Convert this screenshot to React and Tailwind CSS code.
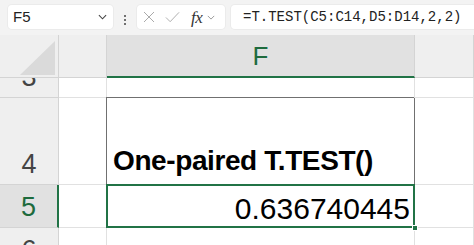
import React from "react";

const gl = "border-r border-b border-[#e1e1e1]";
const hd = "border-r border-b border-[#d4d4d4] bg-[#efefef]";

const Chevron = ({ className }) => (
  <svg viewBox="0 0 10 6" className={className} fill="none" stroke="currentColor" strokeWidth="1.2">
    <path d="M1 1l4 4 4-4" />
  </svg>
);

const RowNum = ({ n, active }) => (
  <div
    className={`flex items-end justify-center pb-[6px] overflow-hidden text-[27px] leading-none ${
      active
        ? "bg-[#e1e1e1] text-[#1e6b3d] border-r-2 border-r-[#217346] border-b border-b-[#d4d4d4]"
        : "bg-[#efefef] text-[#444] border-r border-b border-[#d4d4d4]"
    }`}
  >
    {n}
  </div>
);

export default function App() {
  return (
    <div className="w-[474px] h-[245px] overflow-hidden bg-white font-['Liberation_Sans',Arial,sans-serif]">
      {/* formula bar */}
      <div className="flex h-[35px] pt-[5px] bg-[#f3f3f3]">
        <div className="ml-[8px] w-[105px] h-[24px] flex items-center justify-between pl-[5px] pr-[6px] bg-white rounded-[4px] shadow-[0_0_0_1px_#ebebeb]">
          <span className="text-[15px] text-[#222]">F5</span>
          <Chevron className="w-[9px] h-[6px] text-[#444]" />
        </div>
        <div className="w-[24px] flex flex-col items-center justify-center gap-[2px] pb-[1px]">
          <span className="w-[2px] h-[2px] rounded-full bg-[#444]" />
          <span className="w-[2px] h-[2px] rounded-full bg-[#444]" />
          <span className="w-[2px] h-[2px] rounded-full bg-[#444]" />
        </div>
        <div className="w-[88px] h-[24px] flex items-center pl-[6px] bg-white rounded-[4px] shadow-[0_0_0_1px_#ebebeb]">
          <svg viewBox="0 0 12 12" className="w-[12px] h-[12px] text-[#aaa]" fill="none" stroke="currentColor" strokeWidth="1">
            <path d="M1 1l10 10M11 1L1 11" />
          </svg>
          <svg viewBox="0 0 16 12" className="ml-[10px] w-[15px] h-[12px] text-[#aaa]" fill="none" stroke="currentColor" strokeWidth="1">
            <path d="M1 6.5l4.5 4.5L15 1" />
          </svg>
          <span className="ml-[11px] text-[17px] leading-none italic text-[#333] font-['Liberation_Serif',serif] tracking-[-0.5px]">
            fx
          </span>
          <Chevron className="ml-[5px] w-[8px] h-[5px] text-[#999]" />
        </div>
        <div className="ml-[6px] flex-1 h-[24px] flex items-center pl-[12px] bg-white rounded-l-[4px] shadow-[0_0_0_1px_#ebebeb]">
          <span className="text-[14px] text-[#222] whitespace-nowrap font-['Liberation_Mono',monospace]">
            =T.TEST(C5:C14,D5:D14,2,2)
          </span>
        </div>
      </div>

      {/* sheet */}
      <div className="grid grid-cols-[59px_48px_308px_1fr] grid-rows-[43px_20px_87px_43px_43px] h-[210px] overflow-hidden">
        {/* column headers */}
        <div className={`${hd} overflow-hidden`}>
          <svg viewBox="0 0 58 42" className="w-[58px] h-[42px]">
            <path d="M55 6V40H20Z" fill="#dadada" />
          </svg>
        </div>
        <div className={hd} />
        <div className="flex items-center justify-center pt-[1px] bg-[#e1e1e1] border-r border-r-[#d4d4d4] border-b-2 border-b-[#217346] text-[26px] text-[#1e6b3d]">
          F
        </div>
        <div className={hd} />

        {/* row 3 */}
        <RowNum n="3" />
        <div className={gl} />
        <div className={gl} />
        <div className={gl} />

        {/* row 4 */}
        <RowNum n="4" />
        <div className={gl} />
        <div className="flex items-end pl-[6px] pb-[2px] border-r border-r-[#707070] border-b border-b-[#e1e1e1] shadow-[-1px_-1px_0_0_#707070]">
          <span className="text-[28px] font-bold text-black tracking-[-0.4px] whitespace-nowrap">
            One-paired T.TEST()
          </span>
        </div>
        <div className={gl} />

        {/* row 5 */}
        <RowNum n="5" active />
        <div className={gl} />
        <div className={`${gl} relative flex items-end justify-end pr-[4px] pb-[3px]`}>
          <span className="text-[30px] leading-none text-black">0.636740445</span>
          <div className="absolute -left-px -top-px -right-px -bottom-px border-2 border-[#217346]" />
          <div className="absolute -right-[4px] -bottom-[4px] w-[6px] h-[6px] bg-[#217346] border border-white" />
        </div>
        <div className={gl} />

        {/* row 6 */}
        <RowNum n="6" />
        <div className={gl} />
        <div className={gl} />
        <div className={gl} />
      </div>
    </div>
  );
}
